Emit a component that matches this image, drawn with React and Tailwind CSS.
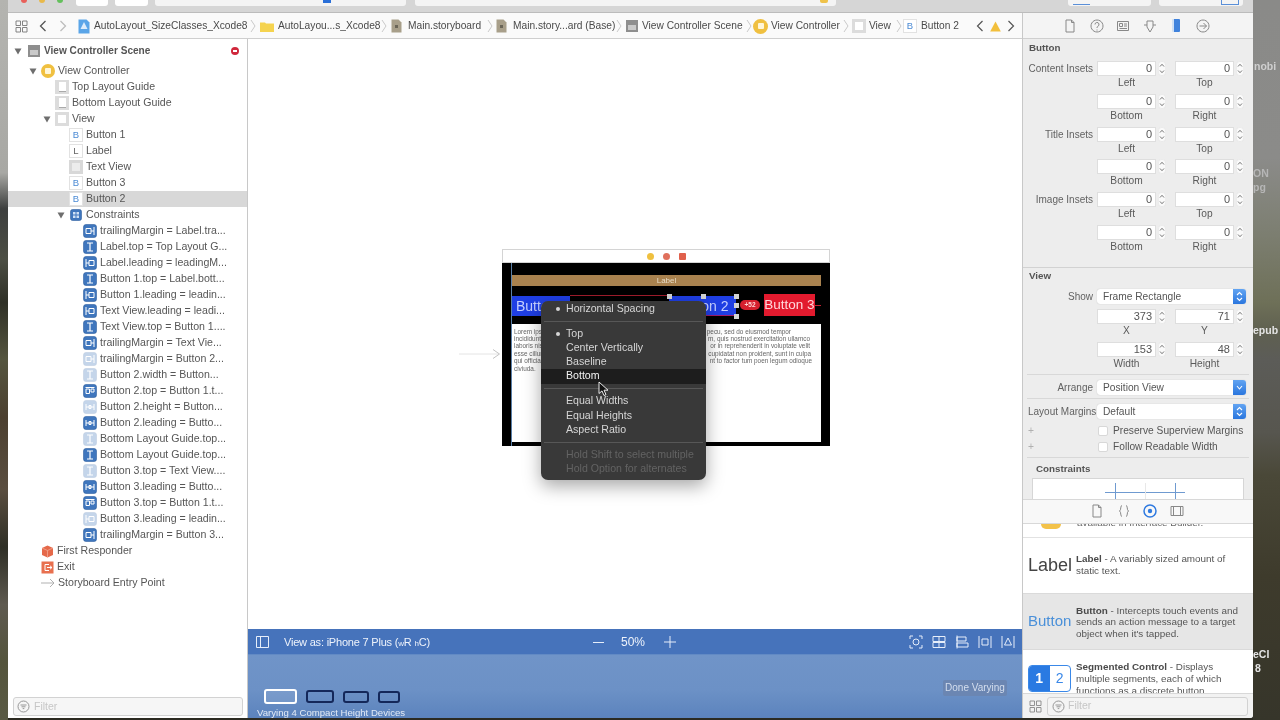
import React from 'react';

const padByLevel = ['pl-[5px]', 'pl-[19px]', 'pl-[33px]', 'pl-[47px]', 'pl-[61px]'];

const treeRows = [
  { level: 1, label: 'View Controller', icon: 'vc', open: true },
  { level: 2, label: 'Top Layout Guide', icon: 'guide' },
  { level: 2, label: 'Bottom Layout Guide', icon: 'guide' },
  { level: 2, label: 'View', icon: 'view', open: true },
  { level: 3, label: 'Button 1', icon: 'B' },
  { level: 3, label: 'Label', icon: 'L' },
  { level: 3, label: 'Text View', icon: 'text' },
  { level: 3, label: 'Button 3', icon: 'B' },
  { level: 3, label: 'Button 2', icon: 'B', selected: true },
  { level: 3, label: 'Constraints', icon: 'constraints', open: true },
  { level: 4, label: 'trailingMargin = Label.tra...', icon: 'r' },
  { level: 4, label: 'Label.top = Top Layout G...', icon: 'i' },
  { level: 4, label: 'Label.leading = leadingM...', icon: 'l' },
  { level: 4, label: 'Button 1.top = Label.bott...', icon: 'i' },
  { level: 4, label: 'Button 1.leading = leadin...', icon: 'l' },
  { level: 4, label: 'Text View.leading = leadi...', icon: 'l' },
  { level: 4, label: 'Text View.top = Button 1....', icon: 'i' },
  { level: 4, label: 'trailingMargin = Text Vie...', icon: 'r' },
  { level: 4, label: 'trailingMargin = Button 2...', icon: 'r', faded: true },
  { level: 4, label: 'Button 2.width = Button...', icon: 'i', faded: true },
  { level: 4, label: 'Button 2.top = Button 1.t...', icon: 'g' },
  { level: 4, label: 'Button 2.height = Button...', icon: 's', faded: true },
  { level: 4, label: 'Button 2.leading = Butto...', icon: 's' },
  { level: 4, label: 'Bottom Layout Guide.top...', icon: 'i', faded: true },
  { level: 4, label: 'Bottom Layout Guide.top...', icon: 'i' },
  { level: 4, label: 'Button 3.top = Text View....', icon: 'i', faded: true },
  { level: 4, label: 'Button 3.leading = Butto...', icon: 's' },
  { level: 4, label: 'Button 3.top = Button 1.t...', icon: 'g' },
  { level: 4, label: 'Button 3.leading = leadin...', icon: 'l', faded: true },
  { level: 4, label: 'trailingMargin = Button 3...', icon: 'r' },
  { level: 1, label: 'First Responder', icon: 'responder' },
  { level: 1, label: 'Exit', icon: 'exit' },
  { level: 1, label: 'Storyboard Entry Point', icon: 'entry' },
];

const insetRows = [
  { label: 'Content Insets', a: 'Left', b: 'Top' },
  { label: '', a: 'Bottom', b: 'Right' },
  { label: 'Title Insets', a: 'Left', b: 'Top' },
  { label: '', a: 'Bottom', b: 'Right' },
  { label: 'Image Insets', a: 'Left', b: 'Top' },
  { label: '', a: 'Bottom', b: 'Right' },
];

function Triangle() {
  return (
    <svg width="8" height="7" viewBox="0 0 8 7">
      <path d="M0.5 0.5 H7.5 L4 6.5 Z" fill="#6e6e6e" />
    </svg>
  );
}

function ConstraintGlyph({ kind }) {
  return (
    <svg width="14" height="14" viewBox="0 0 14 14" className="shrink-0">
      <rect x="0.5" y="0.5" width="13" height="13" rx="2.5" fill="#3f76bd" stroke="#2f5f9f" strokeWidth="0.6" />
      {kind === 'r' && <path d="M3 4.5h5v5H3z M11 3v8 M8 7h3" fill="none" stroke="#fff" strokeWidth="1" />}
      {kind === 'l' && <path d="M3 3v8 M6 4.5h5v5H6z M3 7h3" fill="none" stroke="#fff" strokeWidth="1" />}
      {kind === 'i' && <path d="M4 3h6 M4 11h6 M7 3v8" fill="none" stroke="#fff" strokeWidth="1.2" />}
      {kind === 'g' && <path d="M2.5 3.5h9 M3 5h3.5v4.5H3z M8 5h3v3H8z" fill="none" stroke="#fff" strokeWidth="1" />}
      {kind === 's' && <path d="M3 4v6 M11 4v6 M3 7h8 M6 5.5h2v3H6z" fill="none" stroke="#fff" strokeWidth="1" />}
    </svg>
  );
}

function TreeIcon({ kind, faded }) {
  if (['r', 'l', 'i', 'g', 's'].includes(kind)) {
    return (
      <span className={faded ? 'flex opacity-30' : 'flex'}>
        <ConstraintGlyph kind={kind} />
      </span>
    );
  }
  if (kind === 'vc') {
    return <CircleVC />;
  }
  if (kind === 'guide' || kind === 'view') {
    return (
      <span className="w-[14px] h-[14px] bg-[#dcdcdc] flex items-center justify-center shrink-0">
        <span className={kind === 'view' ? 'w-2 h-2 bg-white' : 'w-[7px] h-[10px] bg-white border-b border-[#aaa]'} />
      </span>
    );
  }
  if (kind === 'text') {
    return (
      <span className="w-[14px] h-[14px] bg-[#d8d8d8] flex items-center justify-center">
        <span className="w-2 h-2 bg-[#ececec]" />
      </span>
    );
  }
  if (kind === 'B' || kind === 'L') {
    return <LetterBox letter={kind} />;
  }
  if (kind === 'constraints') {
    return (
      <svg width="12" height="12" viewBox="0 0 12 12" className="mx-px">
        <rect x="0.5" y="0.5" width="11" height="11" rx="2" fill="#3f76bd" stroke="#2f5f9f" strokeWidth="0.6" />
        <path d="M3 3h2.5v2.5H3z M6.5 3H9v2.5H6.5z M3 6.5h2.5V9H3z M6.5 6.5H9V9H6.5z" fill="#cfe0f5" />
      </svg>
    );
  }
  if (kind === 'responder') {
    return (
      <svg width="13" height="13" viewBox="0 0 13 13">
        <path d="M6.5 0.5 L12 3 V10 L6.5 12.5 L1 10 V3 Z" fill="#e5694a" />
        <path d="M1 3 L6.5 5.5 L12 3 M6.5 5.5 V12.5" fill="none" stroke="#f5b09c" strokeWidth="0.7" />
      </svg>
    );
  }
  if (kind === 'exit') {
    return (
      <svg width="13" height="13" viewBox="0 0 13 13">
        <rect x="0.5" y="0.5" width="12" height="12" fill="#e8704f" />
        <path d="M8 3.5H4v6h4 M6 6.5h5 M9 4.8l2 1.7-2 1.7" fill="none" stroke="#fff" strokeWidth="1" />
      </svg>
    );
  }
  return (
    <svg width="14" height="10" viewBox="0 0 14 10">
      <path d="M0 5h13 M9 1l4 4-4 4" fill="none" stroke="#a8a8a8" strokeWidth="0.9" />
    </svg>
  );
}

function CircleVC({ big }) {
  return (
    <span className={big ? 'w-[15px] h-[15px] rounded-full bg-[#f0c040] flex items-center justify-center shrink-0' : 'w-[14px] h-[14px] rounded-full bg-[#f0c040] flex items-center justify-center shrink-0'}>
      <span className="w-[6px] h-[6px] bg-[#fff6d8] rounded-[1px]" />
    </span>
  );
}

function LetterBox({ letter }) {
  return (
    <span className="w-[14px] h-[14px] bg-white border border-[#e2e2e2] flex items-center justify-center shrink-0 text-[9.5px] leading-none">
      <span className={letter === 'B' ? 'text-[#4a8ad4]' : 'text-[#666]'}>{letter}</span>
    </span>
  );
}

function Sep() {
  return (
    <svg width="6" height="14" viewBox="0 0 6 14" className="shrink-0">
      <path d="M1 1l4 6-4 6" fill="none" stroke="#c4c4c4" strokeWidth="0.9" />
    </svg>
  );
}

function Doc() {
  return (
    <svg width="11" height="14" viewBox="0 0 11 14" className="shrink-0">
      <path d="M0.5 0.5h7l3 3v10h-10z" fill="#a89f8a" />
      <rect x="4" y="6" width="3" height="3" fill="#6b6658" />
    </svg>
  );
}

function SceneIcon() {
  return (
    <span className="w-3 h-3 bg-[#8e8e8e] flex items-end justify-center shrink-0 pb-[2px]">
      <span className="w-2 h-[5px] bg-[#c9c9c9]" />
    </span>
  );
}

function JumpBar() {
  return (
    <div className="h-[26px] pt-px flex items-center border-b border-[#cfcfcf] bg-[#fafafa] text-[#4a4a4a] text-[10.2px] whitespace-nowrap">
      <svg width="13" height="13" viewBox="0 0 13 13" className="ml-[7px]">
        <path d="M1 1h4.5v4.5H1z M7.5 1H12v4.5H7.5z M1 7.5h4.5V12H1z M7.5 7.5H12V12H7.5z" fill="none" stroke="#777" strokeWidth="0.9" />
      </svg>
      <svg width="8" height="12" viewBox="0 0 8 12" className="ml-[11px]"><path d="M6.5 1L1.5 6l5 5" fill="none" stroke="#555" strokeWidth="1.3" /></svg>
      <svg width="8" height="12" viewBox="0 0 8 12" className="ml-[12px]"><path d="M1.5 1l5 5-5 5" fill="none" stroke="#bdbdbd" strokeWidth="1.3" /></svg>
      <svg width="12" height="15" viewBox="0 0 12 15" className="ml-[11px]">
        <path d="M0.5 0.5h8l3 3v11H0.5z" fill="#5aa5e8" />
        <path d="M6 3l3.5 7h-7z" fill="#dcecfb" />
      </svg>
      <span className="ml-[4px] w-[153px]">AutoLayout_SizeClasses_Xcode8</span>
      <span className="mx-[3px] flex"><Sep /></span>
      <svg width="14" height="11" viewBox="0 0 14 11" className="ml-[1px]"><path d="M0 1.5h5l1 1h8v8.5H0z" fill="#f5d34f" /></svg>
      <span className="ml-[4px] w-[99px]">AutoLayou...s_Xcode8</span>
      <span className="mx-[4px] flex"><Sep /></span>
      <Doc />
      <span className="ml-[6px] w-[76px]">Main.storyboard</span>
      <span className="mx-[3px] flex"><Sep /></span>
      <Doc />
      <span className="ml-[6px] w-[99px]">Main.story...ard (Base)</span>
      <span className="mx-[4px] flex"><Sep /></span>
      <SceneIcon />
      <span className="ml-[4px] w-[101px]">View Controller Scene</span>
      <span className="ml-[3px] mr-[1px] flex"><Sep /></span>
      <CircleVC big />
      <span className="ml-[3px] w-[69px]">View Controller</span>
      <span className="mx-[3px] flex"><Sep /></span>
      <TreeIcon kind="view" />
      <span className="ml-[3px] w-[27px]">View</span>
      <span className="mr-px flex"><Sep /></span>
      <LetterBox letter="B" />
      <span className="ml-[4px] w-[45px]">Button 2</span>
      <svg width="8" height="12" viewBox="0 0 8 12" className="ml-[10px]"><path d="M6.5 1L1.5 6l5 5" fill="none" stroke="#555" strokeWidth="1.2" /></svg>
      <svg width="11" height="11" viewBox="0 0 11 11" className="ml-[6px]"><path d="M5.5 0.5L10.8 10.5H0.2z" fill="#f2bf3c" /></svg>
      <svg width="8" height="12" viewBox="0 0 8 12" className="ml-[6px]"><path d="M1.5 1l5 5-5 5" fill="none" stroke="#555" strokeWidth="1.2" /></svg>
    </div>
  );
}

function FilterBox({ small }) {
  return (
    <div className={small ? 'h-[19px] flex-1 bg-[#f4f4f4] border border-[#d2d2d2] rounded-[3px] flex items-center pl-[4px] gap-[3px] text-[10.5px] text-[#c6c6c6]' : 'h-[19px] w-[230px] bg-[#f6f6f6] border border-[#d2d2d2] rounded-[3px] flex items-center pl-[3px] gap-[4px] text-[10.5px] text-[#c6c6c6]'}>
      <svg width="13" height="13" viewBox="0 0 13 13">
        <circle cx="6.5" cy="6.5" r="5.5" fill="none" stroke="#8c8c8c" strokeWidth="0.9" />
        <path d="M3.5 5h6 M4.5 6.8h4 M5.7 8.6h1.6" stroke="#8c8c8c" strokeWidth="0.9" />
      </svg>
      <span>Filter</span>
    </div>
  );
}

function Navigator() {
  return (
    <div className="w-[240px] shrink-0 bg-white border-r border-[#c8c8c8] flex flex-col pt-[4px] text-[10.6px] text-[#565656] whitespace-nowrap">
      <div className="h-4 flex items-center pl-[6px] relative">
        <span className="w-[14px] flex"><Triangle /></span>
        <SceneIcon />
        <span className="ml-[4px] font-bold text-[#555] text-[10.1px]">View Controller Scene</span>
        <span className="absolute left-[223px] top-[4px] w-2 h-2 rounded-full bg-[#d0283c] flex items-center justify-center">
          <span className="w-1 h-[2px] bg-white" />
        </span>
      </div>
      <div className="mt-1">
        {treeRows.map((row, i) => (
          <div key={i} className={(row.selected ? 'bg-[#d8d8d8] ' : '') + 'h-4 flex items-center ' + padByLevel[row.level]}>
            <span className="w-[14px] flex shrink-0 pl-[2px]">{row.open && <Triangle />}</span>
            <TreeIcon kind={row.icon} faded={row.faded} />
            <span className="ml-[3px]">{row.label}</span>
          </div>
        ))}
      </div>
      <div className="mt-auto px-[5px] pb-[2px]">
        <FilterBox />
      </div>
    </div>
  );
}

function Storyboard() {
  return (
    <div className="absolute left-[254px] top-[210px] w-[328px] h-[197px]">
      <div className="h-[14px] bg-white border border-[#d4d4d4] flex items-center justify-center gap-[9px]">
        <span className="w-[7px] h-[7px] rounded-full bg-[#efc03f]" />
        <span className="w-[7px] h-[7px] rounded-full bg-[#e0705c]" />
        <span className="w-[7px] h-[7px] rounded-[1px] bg-[#e0604c]" />
      </div>
      <div className="relative h-[183px] bg-black overflow-hidden">
        <div className="absolute left-[9px] top-0 bottom-0 w-px bg-[#5a7fa8]" />
        <div className="absolute left-[10px] top-[12px] w-[309px] h-[11px] bg-[#a9824f] text-[8px] leading-[11px] text-center text-[#e8dcc6]">Label</div>
        <div className="absolute left-[68px] top-[32px] w-[99px] h-px bg-[#a01c2c]" />
        <div className="absolute left-[10px] top-[33px] w-[58px] h-5 bg-[#1f3fe4] text-[14px] leading-5 pl-[4px] text-[#c6d0ff] whitespace-nowrap">Button 1</div>
        <div className="absolute left-[167px] top-[33px] w-[67px] h-5 bg-[#1f3fe4] border-b border-[#a01c6c] text-[14px] leading-5 text-center text-[#c6d0ff] whitespace-nowrap">Button 2</div>
        <span className="absolute left-[165px] top-[31px] w-[5px] h-[5px] bg-[#d4d4d4]" />
        <span className="absolute left-[199px] top-[31px] w-[5px] h-[5px] bg-[#d4d4d4]" />
        <span className="absolute left-[232px] top-[31px] w-[5px] h-[5px] bg-[#d4d4d4]" />
        <span className="absolute left-[232px] top-[40px] w-[5px] h-[5px] bg-[#d4d4d4]" />
        <span className="absolute left-[232px] top-[51px] w-[5px] h-[5px] bg-[#d4d4d4]" />
        <div className="absolute left-[238px] top-[37px] w-5 h-[10px] rounded-full bg-[#d6202e] text-[6.5px] leading-[10px] font-bold text-center text-[#ffd6d6]">+52</div>
        <div className="absolute left-[262px] top-[31px] w-[51px] h-[22px] bg-[#e21a2e] text-[13.5px] leading-[22px] text-center text-[#ffd8dc] whitespace-nowrap">Button 3</div>
        <div className="absolute left-[313px] top-[42px] w-[6px] h-px bg-[#c02030]" />
        <div className="absolute left-[10px] top-[61px] w-[309px] h-[118px] bg-white pl-[2px] pt-[3.5px] text-[6.4px] leading-[7.4px] text-[#666] whitespace-nowrap">
          <div className="flex justify-between pr-[30px]"><span>Lorem ipsum dolor</span><span>pecu, sed do eiusmod tempor</span></div>
          <div className="flex justify-between pr-[11px]"><span>incididunt ut labore</span><span>m, quis nostrud exercitation ullamco</span></div>
          <div className="flex justify-between pr-[11px]"><span>laboris nisi ut aliquip</span><span>or in reprehenderit in voluptate velit</span></div>
          <div className="flex justify-between pr-[10px]"><span>esse cillum dolore eu</span><span>cupidatat non proident, sunt in culpa</span></div>
          <div className="flex justify-between pr-[9px]"><span>qui officia deserunt</span><span>nt to factor tum poen legum odioque</span></div>
          <div>civiuda.</div>
        </div>
      </div>
    </div>
  );
}

function MenuItem({ label, bullet, active, dim }) {
  let cls = 'h-[14.25px] flex items-center pl-[25px] relative text-[#d6d6d6]';
  if (active) cls = 'h-[14.25px] flex items-center pl-[25px] relative bg-[#1d1d1d] text-[#f2f2f2]';
  if (dim) cls = 'h-[14.25px] flex items-center pl-[25px] relative text-[#636363]';
  return (
    <div className={cls}>
      {bullet && <span className="absolute left-[15px] top-[5.5px] w-[4px] h-[4px] rounded-full bg-[#d6d6d6]" />}
      {label}
    </div>
  );
}

function MenuSep() {
  return (
    <div className="h-[10.75px] flex items-center px-[3px]">
      <div className="h-px w-full bg-[#575757]" />
    </div>
  );
}

function ConstraintMenu() {
  return (
    <div className="absolute left-[293px] top-[262px] w-[165px] h-[179px] bg-[#393939] rounded-[7px] shadow-[0_6px_18px_rgba(0,0,0,0.35)] text-[10.6px] pt-[0.5px] whitespace-nowrap">
      <MenuItem label="Horizontal Spacing" bullet />
      <MenuSep />
      <MenuItem label="Top" bullet />
      <MenuItem label="Center Vertically" />
      <MenuItem label="Baseline" />
      <MenuItem label="Bottom" active />
      <MenuSep />
      <MenuItem label="Equal Widths" />
      <MenuItem label="Equal Heights" />
      <MenuItem label="Aspect Ratio" />
      <MenuSep />
      <MenuItem label="Hold Shift to select multiple" dim />
      <MenuItem label="Hold Option for alternates" dim />
    </div>
  );
}

function Cursor() {
  return (
    <svg width="11" height="16" viewBox="0 0 11 16" className="absolute left-[350px] top-[342px]">
      <path d="M1 1v11.5l3-2.6 2 4.6 2-0.9-2-4.4h4z" fill="#111" stroke="#fff" strokeWidth="0.9" />
    </svg>
  );
}

function BarIcon({ d, className }) {
  return (
    <svg width="14" height="14" viewBox="0 0 14 14" className={className}>
      <path d={d} fill="none" stroke="#e6eefa" strokeWidth="1" />
    </svg>
  );
}

function Device({ size }) {
  const cls = {
    white: 'w-[33px] h-[15px] border-2 border-white rounded-[3px] bg-white/10',
    a: 'w-[28px] h-[13px] border-2 border-[#14285a] rounded-[3px]',
    b: 'w-[26px] h-[12px] border-2 border-[#14285a] rounded-[3px]',
    c: 'w-[22px] h-[12px] border-2 border-[#14285a] rounded-[3px]',
  };
  return <span className={cls[size]} />;
}

function Canvas() {
  return (
    <div className="flex-1 flex flex-col min-w-0">
      <div className="flex-1 relative bg-white">
        <svg width="42" height="10" viewBox="0 0 42 10" className="absolute left-[211px] top-[310px]">
          <path d="M0 5h40" stroke="#e4e4e4" strokeWidth="1" />
          <path d="M34 0.5L40.5 5 34 9.5" fill="none" stroke="#c2c2c2" strokeWidth="1" />
        </svg>
        <Storyboard />
        <ConstraintMenu />
        <Cursor />
      </div>
      <div className="h-[26px] pt-px bg-[#4673bb] border-b border-[#628ac4] flex items-center text-[#eef3fb] text-[11px] whitespace-nowrap">
        <svg width="13" height="12" viewBox="0 0 13 12" className="ml-[8px]">
          <path d="M0.5 0.5h12v11H0.5z M4.5 0.5v11" fill="none" stroke="#e6eefa" strokeWidth="1" />
        </svg>
        <span className="ml-[15px] w-[140px] tracking-[-0.2px]">View as: iPhone 7 Plus (<span className="text-[8px]">w</span>R <span className="text-[8px]">h</span>C)</span>
        <span className="ml-[169px] w-[11px] h-px bg-[#e6eefa]" />
        <span className="ml-[17px] w-[26px] text-[12px]">50%</span>
        <svg width="12" height="12" viewBox="0 0 12 12" className="ml-[17px]"><path d="M6 0v12 M0 6h12" stroke="#e6eefa" strokeWidth="1" /></svg>
        <div className="ml-auto mr-[7px] flex gap-[9px]">
          <BarIcon d="M1 4V1h3 M10 1h3v3 M1 10v3h3 M13 10v3h-3 M4 7a3 3 0 0 1 6 0 M10 7a3 3 0 0 1-6 0" />
          <BarIcon d="M1 1.5h12v5H1z M1 7.5h12v5H1z M7 1.5v11" />
          <BarIcon d="M2 0.5v13 M2 2h9v4H2z M2 8h11v4H2z" />
          <BarIcon d="M1 1v12 M13 1v12 M4 4h6v6H4z" />
          <BarIcon d="M1 1v12 M13 1v12 M7 3l3.5 7h-7z" />
        </div>
      </div>
      <div className="h-[63px] bg-[linear-gradient(180deg,#7094c8_0%,#6c91c6_55%,#5c83bd_100%)] relative">
        <div className="absolute left-[16px] top-[34px] flex items-center gap-[9px]">
          <Device size="white" />
          <Device size="a" />
          <Device size="b" />
          <Device size="c" />
        </div>
        <div className="absolute left-[9px] top-[52px] text-[9.6px] leading-[12px] text-[#e2eaf6] whitespace-nowrap">Varying 4 Compact Height Devices</div>
        <div className="absolute left-[695px] top-[25px] w-[64px] h-[16px] bg-[#6b86b2] rounded-[2px] text-[10px] leading-[15px] text-center text-[#d4deee] whitespace-nowrap">Done Varying</div>
      </div>
    </div>
  );
}

function Stepper() {
  return (
    <svg width="8" height="15" viewBox="0 0 8 15" className="ml-[2px] shrink-0">
      <rect x="0.3" y="0.3" width="7.4" height="14.4" rx="3.7" fill="#fafafa" stroke="#dedede" strokeWidth="0.5" />
      <path d="M2 5.5L4 3.3 6 5.5 M2 9.5L4 11.7 6 9.5" fill="none" stroke="#666" strokeWidth="0.9" />
    </svg>
  );
}

function NumField({ value, caption }) {
  return (
    <div className="w-[78px] shrink-0">
      <div className="flex w-[70px]">
        <div className="w-[59px] h-[15px] bg-white border border-[#dedede] text-right pr-[3px] text-[11px] leading-[13px] text-[#555]">{value}</div>
        <Stepper />
      </div>
      <div className="w-[59px] text-center text-[10.2px] leading-[13px] text-[#5a5a5a]">{caption}</div>
    </div>
  );
}

function RowLabel({ children }) {
  return <div className="w-[69px] shrink-0 pr-[4px] text-right text-[10px] text-[#626262] whitespace-nowrap leading-[15px]">{children}</div>;
}

function SelectBox({ value, single }) {
  return (
    <div className="w-[149px] h-[15px] bg-white rounded-[3px] flex items-center pl-[6px] text-[#555] shadow-[0_0_1px_rgba(0,0,0,0.25)]">
      <span className="flex-1">{value}</span>
      <span className="w-[13px] h-[15px] bg-[linear-gradient(180deg,#62a4f2,#2a76de)] rounded-r-[3px] flex items-center justify-center">
        <svg width="7" height="11" viewBox="0 0 7 11">
          {single
            ? <path d="M1 4l2.5 3L6 4" fill="none" stroke="#fff" strokeWidth="1.1" />
            : <path d="M1 4l2.5-2.5L6 4 M1 7l2.5 2.5L6 7" fill="none" stroke="#fff" strokeWidth="1.1" />}
        </svg>
      </span>
    </div>
  );
}

function FormRow({ label, children, className }) {
  return (
    <div className={'flex pl-[5px] ' + (className || '')}>
      <RowLabel>{label}</RowLabel>
      {children}
    </div>
  );
}

function InsIcon({ d, blue, className }) {
  return (
    <svg width="14" height="14" viewBox="0 0 14 14" className={className}>
      <path d={d} fill="none" stroke={blue ? '#2f7ae0' : '#888'} strokeWidth="1" />
    </svg>
  );
}

function Inspector() {
  return (
    <div className="w-[231px] shrink-0 bg-[#ededed] border-l border-[#c8c8c8] flex flex-col text-[10.2px] text-[#555] whitespace-nowrap overflow-hidden rounded-br-[3px]">
      <div className="h-[26px] border-b border-[#cfcfcf] bg-[#f4f4f4] flex items-center pl-[40px] gap-[12.6px]">
        <InsIcon d="M3 1h5.5L11 3.5V13H3z M8.5 1v2.5H11" />
        <InsIcon d="M7 1a6 6 0 1 0 0.01 0 M5 5.5a2 2 0 1 1 2.8 1.8C7.2 7.7 7 8 7 9 M7 10.5v1" />
        <InsIcon d="M1.5 2.5h11v9h-11z M3.5 4.5h3v3h-3z M8 5h3 M8 7h3 M3.5 9.5h7.5" />
        <InsIcon d="M4 2h6v6l-3 5-3-5z M1 6h3 M10 6h3" />
        <span className="w-[14px] flex justify-center"><span className="w-2 h-[13px] bg-[#3f82dc] rounded-[1px] border-l-2 border-[#cfe0f5]" /></span>
        <InsIcon d="M7 1a6 6 0 1 0 0.01 0 M3.5 7h7 M7.5 4l3 3-3 3" />
      </div>

      <div className="h-4 leading-[17px] pl-[6px] font-bold text-[#555] text-[9.8px]">Button</div>
      <div className="mt-[6px]">
        {insetRows.map((row, i) => (
          <FormRow key={i} label={row.label} className="h-[32.8px]">
            <NumField value="0" caption={row.a} />
            <NumField value="0" caption={row.b} />
          </FormRow>
        ))}
      </div>
      <div className="h-px bg-[#d2d2d2] mt-[9px]" />

      <div className="h-4 leading-4 pl-[6px] font-bold text-[#555] text-[9.8px]">View</div>
      <FormRow label="Show" className="mt-[5px]"><SelectBox value="Frame Rectangle" /></FormRow>
      <FormRow label="" className="mt-[5px] h-[33px]">
        <NumField value="373" caption="X" />
        <NumField value="71" caption="Y" />
      </FormRow>
      <FormRow label="" className="h-[32px]">
        <NumField value="153" caption="Width" />
        <NumField value="48" caption="Height" />
      </FormRow>
      <div className="h-px bg-[#d8d8d8] mx-[4px]" />
      <FormRow label="Arrange" className="mt-[5px]"><SelectBox value="Position View" single /></FormRow>
      <div className="h-px bg-[#d8d8d8] mx-[4px] mt-[3px]" />
      <FormRow label="Layout Margins" className="mt-[5px]"><SelectBox value="Default" /></FormRow>
      <div className="mt-[4px] h-4 flex items-center pl-[5px]">
        <span className="w-[69px] shrink-0 text-[#b0b0b0]">+</span>
        <span className="w-[10px] h-[10px] bg-white border border-[#d8d8d8] rounded-[2px] mx-[1px] shrink-0" />
        <span className="ml-[4px]">Preserve Superview Margins</span>
      </div>
      <div className="h-4 flex items-center pl-[5px]">
        <span className="w-[69px] shrink-0 text-[#b0b0b0]">+</span>
        <span className="w-[10px] h-[10px] bg-white border border-[#d8d8d8] rounded-[2px] mx-[1px] shrink-0" />
        <span className="ml-[4px]">Follow Readable Width</span>
      </div>
      <div className="h-px bg-[#d8d8d8] mx-[4px] mt-[2px]" />
      <div className="h-[20px] leading-[21px] pl-[13px] font-bold text-[#555] text-[9.8px]">Constraints</div>
      <div className="relative h-[21px] mx-[9px] bg-white border border-b-0 border-[#d6d6d6]">
        <span className="absolute left-[72px] top-[13px] w-[80px] h-px bg-[#6f9ad0]" />
        <span className="absolute left-[82px] top-[4px] bottom-0 w-px bg-[#6f9ad0]" />
        <span className="absolute left-[142px] top-[4px] bottom-0 w-px bg-[#6f9ad0]" />
        <span className="absolute left-[112px] top-[4px] bottom-0 w-px bg-[#e8e8e8]" />
      </div>

      <div className="h-[25px] bg-[#f8f8f8] border-y border-[#d8d8d8] flex items-center pl-[67px] gap-[12.6px] shrink-0">
        <InsIcon d="M3 1h5.5L11 3.5V13H3z M8.5 1v2.5H11" />
        <InsIcon d="M5 1.5C3 1.5 4.5 6 2.5 7 4.5 8 3 12.5 5 12.5 M9 1.5C11 1.5 9.5 6 11.5 7 9.5 8 11 12.5 9 12.5" />
        <svg width="14" height="14" viewBox="0 0 14 14">
          <circle cx="7" cy="7" r="6" fill="none" stroke="#2f7ae0" strokeWidth="1.5" />
          <circle cx="7" cy="7" r="2.2" fill="#2f7ae0" />
        </svg>
        <InsIcon d="M1 2.5h12v9H1z M3.5 2.5v9 M10.5 2.5v9" />
      </div>

      <div className="h-[14px] bg-white border-b border-[#e2e2e2] relative overflow-hidden shrink-0 text-[9.9px]">
        <span className="absolute left-[18px] top-0 w-[20px] h-[5px] bg-[#f3c24a] rounded-b-full" />
        <span className="absolute left-[54px] top-[-8px] text-[#666]">available in Interface Builder.</span>
      </div>
      <div className="h-[56px] bg-white border-b border-[#dadada] flex items-center pl-[5px] shrink-0 text-[9.9px]">
        <span className="w-[48px] text-[18px] text-[#444]">Label</span>
        <div className="leading-[12px]">
          <div><span className="font-bold text-[#4a4a4a]">Label</span> - A variably sized amount of</div>
          <div>static text.</div>
        </div>
      </div>
      <div className="h-[56px] bg-[#e6e6e6] border-b border-[#dadada] flex items-center pl-[5px] shrink-0 text-[9.9px]">
        <span className="w-[48px] text-[15px] text-[#4a90d9]">Button</span>
        <div className="leading-[11.7px] pt-[2px]">
          <div><span className="font-bold text-[#4a4a4a]">Button</span> - Intercepts touch events and</div>
          <div>sends an action message to a target</div>
          <div>object when it's tapped.</div>
        </div>
      </div>
      <div className="flex-1 min-h-0 bg-white flex pl-[5px] pt-[11px] overflow-hidden text-[9.9px]">
        <div className="w-[43px] h-[27px] rounded-[4px] border border-[#3a88e8] flex text-[14px] shrink-0 mt-[4px] overflow-hidden">
          <span className="w-1/2 bg-[#2a7ae2] text-white flex items-center justify-center font-bold">1</span>
          <span className="w-1/2 text-[#3a88e8] flex items-center justify-center">2</span>
        </div>
        <div className="ml-[5px] leading-[12px]">
          <div><span className="font-bold text-[#4a4a4a]">Segmented Control</span> - Displays</div>
          <div>multiple segments, each of which</div>
          <div>functions as a discrete button.</div>
        </div>
      </div>
      <div className="h-[25px] shrink-0 bg-[#f2f2f2] border-t border-[#d8d8d8] flex items-center pl-[6px] pr-[5px] gap-[5px]">
        <svg width="13" height="13" viewBox="0 0 13 13">
          <path d="M1 1h4.5v4.5H1z M7.5 1H12v4.5H7.5z M1 7.5h4.5V12H1z M7.5 7.5H12V12H7.5z" fill="none" stroke="#888" strokeWidth="0.9" />
        </svg>
        <FilterBox small />
      </div>
    </div>
  );
}

function TopToolbar() {
  return (
    <div className="h-[13px] bg-[#d6d6d6] border-b border-[#bcbcbc] flex items-start overflow-hidden">
      <div className="flex gap-[12px] ml-[13px] -mt-[3px] shrink-0">
        <span className="w-[6px] h-[6px] rounded-full bg-[#e8605a]" />
        <span className="w-[6px] h-[6px] rounded-full bg-[#e8b94a]" />
        <span className="w-[6px] h-[6px] rounded-full bg-[#64c05c]" />
      </div>
      <span className="ml-[13px] w-[32px] h-[6px] bg-white rounded-b-[3px] shrink-0" />
      <span className="ml-[7px] w-[33px] h-[6px] bg-white rounded-b-[3px] shrink-0" />
      <span className="ml-[7px] w-[251px] h-[6px] bg-[#f4f4f4] rounded-b-[3px] shrink-0 flex pl-[168px]">
        <span className="w-[8px] h-[3px] bg-[#2a6fd8]" />
      </span>
      <span className="ml-[9px] w-[421px] h-[6px] bg-[#f4f4f4] rounded-b-[3px] shrink-0 flex justify-end pr-[8px]">
        <span className="w-[8px] h-[3px] bg-[#efc24a] rounded-b-[2px]" />
      </span>
      <span className="ml-[232px] w-[83px] h-[6px] bg-[#f4f4f4] rounded-b-[3px] shrink-0 flex pl-[5px] items-end pb-px">
        <span className="w-[17px] h-px bg-[#5a8fd8]" />
      </span>
      <span className="ml-[8px] w-[84px] h-[6px] bg-[#f4f4f4] rounded-b-[3px] shrink-0 flex justify-end items-start pr-[4px]">
        <span className="w-[18px] h-[5px] border-x border-b border-[#5a8fd8]" />
      </span>
    </div>
  );
}

function Wallpaper() {
  return (
    <div className="flex-1 relative bg-[linear-gradient(180deg,#8a8a88_0%,#8b8b89_22%,#7d7f72_32%,#6e7058_42%,#5f6050_46%,#5c5c58_50%,#57564f_60%,#4a4838_66%,#3e3b2c_80%,#36352a_100%)] text-[10.5px] font-bold text-[#e4e4e4] whitespace-nowrap overflow-hidden">
      <span className="absolute left-[1px] top-[59px] text-[#cfcfcf]">nobi</span>
      <span className="absolute left-[0px] top-[166px] text-[#b6b6b6]">ON</span>
      <span className="absolute left-[0px] top-[180px] text-[#b6b6b6]">pg</span>
      <span className="absolute left-[0px] top-[323px]">epub</span>
      <span className="absolute left-[0px] top-[647px]">eCI</span>
      <span className="absolute left-[2px] top-[661px]">8</span>
    </div>
  );
}

export default function App() {
  return (
    <div className="w-[1280px] h-[720px] flex overflow-hidden bg-[#2c2b22] font-['Liberation_Sans',sans-serif] blur-[0.4px]">
      <div className="w-2 shrink-0 bg-[linear-gradient(180deg,#b4b4b0_0%,#a8a8a4_24%,#3d3f3e_29%,#4c4e44_36%,#2f3026_42%,#55553f_50%,#4c4030_58%,#5a4e40_68%,#2f2f26_76%,#5e5a50_84%,#54543c_92%,#5a5a44_100%)]" />
      <div className="w-[1245px] h-[718px] shrink-0 flex flex-col">
        <TopToolbar />
        <div className="flex-1 min-h-0 flex">
          <div className="flex-1 min-w-0 flex flex-col">
            <JumpBar />
            <div className="flex-1 min-h-0 flex">
              <Navigator />
              <Canvas />
            </div>
          </div>
          <Inspector />
        </div>
      </div>
      <Wallpaper />
    </div>
  );
}
